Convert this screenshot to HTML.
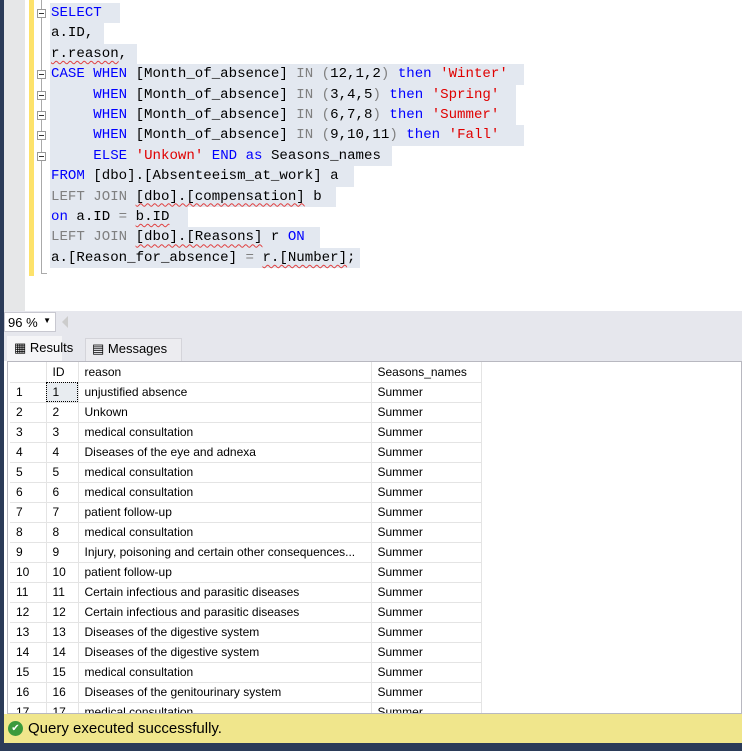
<!DOCTYPE html>
<html><head><meta charset="utf-8"><style>
*{margin:0;padding:0;box-sizing:border-box}
body{width:742px;height:751px;overflow:hidden;background:#fff;position:relative;font-family:"Liberation Sans",sans-serif}
.a{position:absolute}
.code{position:absolute;left:51px;font-family:"Liberation Mono",monospace;font-size:14.1px;white-space:pre;line-height:20.4px;color:#000}
.ln{position:absolute;left:50px;height:20.4px;background:#e3e8f0}
.k{color:#0000ff}.g{color:#808080}.s{color:#e00000}
.u{text-decoration:underline wavy #e04040;text-decoration-thickness:1px;text-underline-offset:3px}
.fb{position:absolute;left:37px;width:9px;height:9px;border:1px solid #999;background:#fff}
.fb:after{content:"";position:absolute;left:1px;top:3px;width:5px;height:1px;background:#333}
table{border-collapse:collapse;font-size:12px;font-family:"Liberation Sans",sans-serif;table-layout:fixed}
td{height:20px;border-right:1px solid #e4e4e4;border-bottom:1px solid #e4e4e4;padding:0 0 0 6px;white-space:nowrap;overflow:hidden}
</style></head><body>
<div class="a" style="left:0;top:0;width:4px;height:751px;background:#2b3b58"></div>
<div class="a" style="left:4px;top:0;width:21px;height:311px;background:#e6e7e8"></div>
<div class="a" style="left:29px;top:0;width:5px;height:276px;background:#fde26b"></div>
<div class="a" style="left:41px;top:0;width:1px;height:274px;background:#aaa"></div>
<div class="a" style="left:41px;top:273px;width:6px;height:1px;background:#aaa"></div>
<div class="fb" style="top:9px"></div><div class="fb" style="top:70px"></div><div class="fb" style="top:91px"></div><div class="fb" style="top:111px"></div><div class="fb" style="top:131px"></div><div class="fb" style="top:152px"></div>
<div class="ln" style="top:3px;width:70px"></div>
<div class="ln" style="top:23.4px;width:54px"></div>
<div class="ln" style="top:43.8px;width:87px"></div>
<div class="ln" style="top:64.2px;width:474px"></div>
<div class="ln" style="top:84.6px;width:466px"></div>
<div class="ln" style="top:105px;width:466px"></div>
<div class="ln" style="top:125.4px;width:474px"></div>
<div class="ln" style="top:145.8px;width:342px"></div>
<div class="ln" style="top:166.2px;width:304px"></div>
<div class="ln" style="top:186.6px;width:286px"></div>
<div class="ln" style="top:207px;width:138px"></div>
<div class="ln" style="top:227.4px;width:270px"></div>
<div class="ln" style="top:247.8px;width:310px"></div>
<div class="code" style="top:3px"><span class="k">SELECT</span>
a.ID,
<span class="u">r.reason</span>,
<span class="k">CASE WHEN</span> [Month_of_absence] <span class="g">IN (</span>12,1,2<span class="g">)</span> <span class="k">then</span> <span class="s">'Winter'</span>
     <span class="k">WHEN</span> [Month_of_absence] <span class="g">IN (</span>3,4,5<span class="g">)</span> <span class="k">then</span> <span class="s">'Spring'</span>
     <span class="k">WHEN</span> [Month_of_absence] <span class="g">IN (</span>6,7,8<span class="g">)</span> <span class="k">then</span> <span class="s">'Summer'</span>
     <span class="k">WHEN</span> [Month_of_absence] <span class="g">IN (</span>9,10,11<span class="g">)</span> <span class="k">then</span> <span class="s">'Fall'</span>
     <span class="k">ELSE</span> <span class="s">'Unkown'</span> <span class="k">END as</span> Seasons_names
<span class="k">FROM</span> [dbo].[Absenteeism_at_work] a
<span class="g">LEFT JOIN</span> <span class="u">[dbo].[compensation]</span> b
<span class="k">on</span> a.ID <span class="g">=</span> <span class="u">b.ID</span>
<span class="g">LEFT JOIN</span> <span class="u">[dbo].[Reasons]</span> r <span class="k">ON</span>
a.[Reason_for_absence] <span class="g">=</span> <span class="u">r.[Number]</span>;</div>
<div class="a" style="left:4px;top:311px;width:738px;height:50px;background:#e6e7ed"></div>
<div class="a" style="left:4px;top:312px;width:52px;height:20px;background:#fff;border:1px solid #c8c8d0;font-size:13px;padding:2px 0 0 3px">96 %<span style="position:absolute;right:4px;top:3px;font-size:8px">▼</span></div>
<div class="a" style="left:62px;top:316px;width:0;height:0;border:6px solid transparent;border-right-color:#ccc;border-left:0"></div>
<div class="a" style="left:7px;top:336px;width:55px;height:26px;background:#f5f5f7;font-size:13px;padding:4px 0 0 7px;white-space:nowrap">▦ Results</div>
<div class="a" style="left:85px;top:338px;width:97px;height:24px;background:#ececf0;border:1px solid #d4d4da;border-bottom:0"></div>
<div class="a" style="left:92px;top:341px;font-size:13px;white-space:nowrap">▤ Messages</div>
<div class="a" style="left:7px;top:361px;width:735px;height:353px;background:#fff;border:1px solid #b8b8c0;overflow:hidden">
<table style="position:absolute;left:2px;top:0;width:471px">
<tr><td style="width:36px"></td><td style="width:32px">ID</td><td style="width:293px">reason</td><td style="width:110px">Seasons_names</td></tr>
<tr><td>1</td><td style="background:#e8ecf0;outline:1px dotted #000;outline-offset:-1px">1</td><td>unjustified absence</td><td>Summer</td></tr>
<tr><td>2</td><td>2</td><td>Unkown</td><td>Summer</td></tr>
<tr><td>3</td><td>3</td><td>medical consultation</td><td>Summer</td></tr>
<tr><td>4</td><td>4</td><td>Diseases of the eye and adnexa</td><td>Summer</td></tr>
<tr><td>5</td><td>5</td><td>medical consultation</td><td>Summer</td></tr>
<tr><td>6</td><td>6</td><td>medical consultation</td><td>Summer</td></tr>
<tr><td>7</td><td>7</td><td>patient follow-up</td><td>Summer</td></tr>
<tr><td>8</td><td>8</td><td>medical consultation</td><td>Summer</td></tr>
<tr><td>9</td><td>9</td><td>Injury, poisoning and certain other consequences...</td><td>Summer</td></tr>
<tr><td>10</td><td>10</td><td>patient follow-up</td><td>Summer</td></tr>
<tr><td>11</td><td>11</td><td>Certain infectious and parasitic diseases</td><td>Summer</td></tr>
<tr><td>12</td><td>12</td><td>Certain infectious and parasitic diseases</td><td>Summer</td></tr>
<tr><td>13</td><td>13</td><td>Diseases of the digestive system</td><td>Summer</td></tr>
<tr><td>14</td><td>14</td><td>Diseases of the digestive system</td><td>Summer</td></tr>
<tr><td>15</td><td>15</td><td>medical consultation</td><td>Summer</td></tr>
<tr><td>16</td><td>16</td><td>Diseases of the genitourinary system</td><td>Summer</td></tr>
<tr><td>17</td><td>17</td><td>medical consultation</td><td>Summer</td></tr>
</table></div>
<div class="a" style="left:4px;top:714px;width:738px;height:29px;background:#f0e68c;font-size:15px;padding:6px 0 0 24px">Query executed successfully.</div>
<div class="a" style="left:8px;top:721px;width:15px;height:15px;border-radius:50%;background:#3c9a3c;color:#fff;font-size:10px;text-align:center;line-height:15px">✔</div>
<div class="a" style="left:0;top:743px;width:742px;height:8px;background:#2b3b58"></div>
</body></html>
